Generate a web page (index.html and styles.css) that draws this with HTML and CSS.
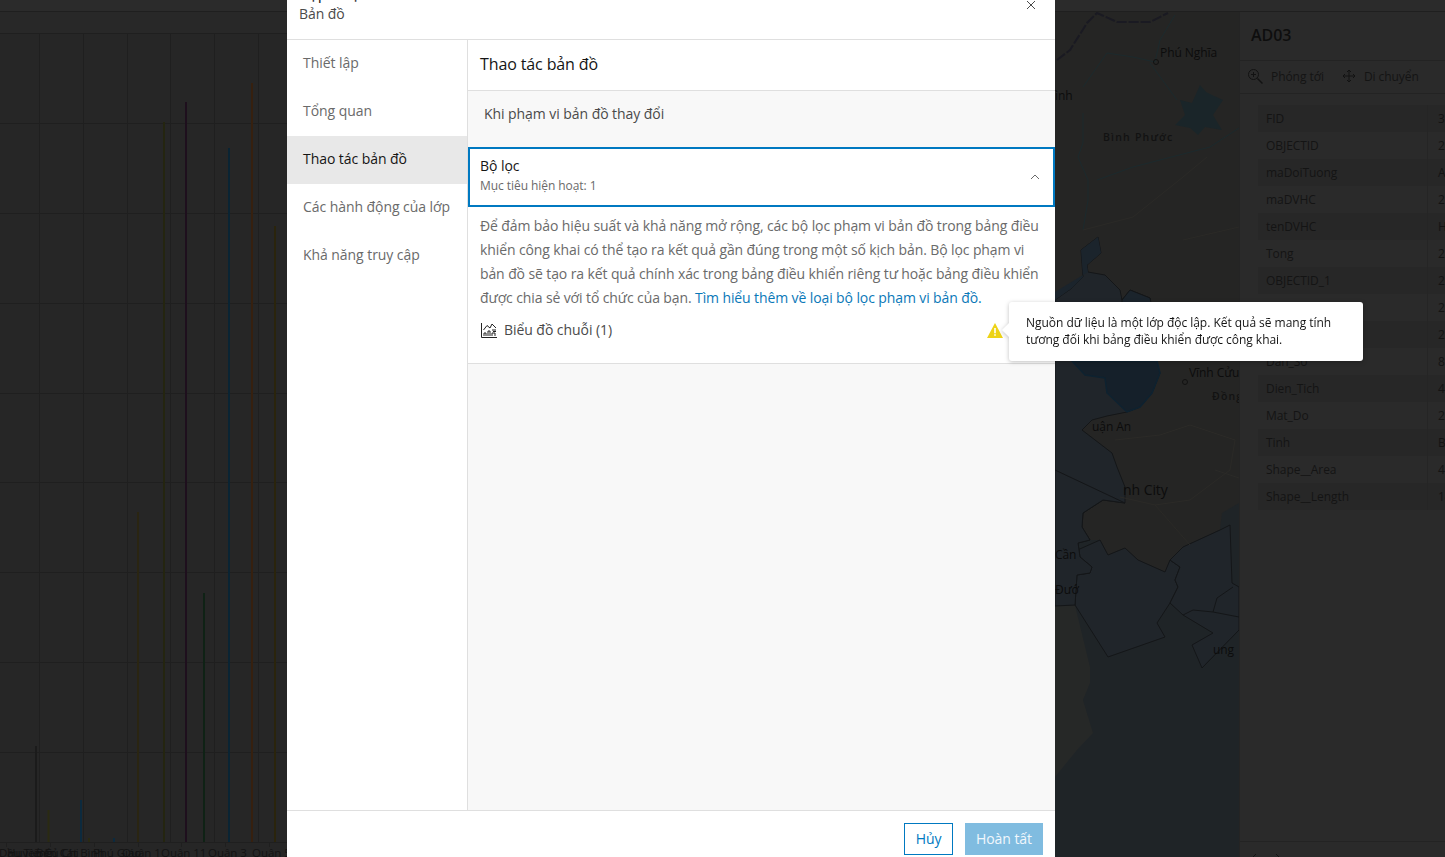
FILE: index.html
```html
<!DOCTYPE html>
<html lang="vi">
<head>
<meta charset="utf-8">
<title>Thao tác bản đồ</title>
<link rel="stylesheet" href="styles.css">
</head>
<body>
<div class="app">
  <div class="topbar"></div>
  <div class="workspace">
    <section class="chart">
      <svg class="chart-svg" width="287" height="845" viewBox="0 12 287 845">
        <rect x="0" y="12" width="287" height="22" fill="#282828"/>
        <g stroke="#1f1f1f" fill="none">
          <path d="M0 33.5H287M0 123.5H287M0 213.5H287M0 303.5H287M0 393.5H287M0 482.5H287M0 572.5H287M0 662.5H287M0 752.5H287M0 842.5H287"/>
          <path d="M39.5 34V842M83.5 34V842M127.5 34V842M170.5 34V842M214.5 34V842M258.5 34V842"/>
          <path d="M6.5 842V847M50.5 842V847M94.5 842V847M138.5 842V847M181.5 842V847M225.5 842V847M269.5 842V847"/>
        </g>
        <g fill="none" stroke-width="2">
          <path d="M36 746V842" stroke="#1b1b1b"/>
          <path d="M48.5 810V842" stroke="#2a2a12"/>
          <path d="M81 800V842" stroke="#0c2a3e"/>
          <path d="M89 838V842" stroke="#2a2a12"/>
          <path d="M114 838V842" stroke="#0c2a3e"/>
          <path d="M138 512V842" stroke="#2a2512"/>
          <path d="M164 122V842" stroke="#242510"/>
          <path d="M186 102V842" stroke="#1e0f1d"/>
          <path d="M204 593V842" stroke="#0f2215"/>
          <path d="M229 148V842" stroke="#0a2433"/>
          <path d="M252 83V842" stroke="#36200f"/>
          <path d="M275 226V842" stroke="#2a240c"/>
        </g>
      </svg>
      <div class="axis-labels">
        <span class="ax ax-a">Dầu Tiếng</span><span class="ax ax-h">Huyện Củ Chi</span><span class="ax ax-b">Bến Cát Bình</span><span class="ax ax-c">Phú Giáo</span><span class="ax ax-d">Quận 1</span><span class="ax ax-e">Quận 11</span><span class="ax ax-f">Quận 3</span><span class="ax ax-g">Quận 5</span>
      </div>
    </section>
    <section class="map">
      <svg class="map-svg" width="184" height="845" viewBox="1055 12 184 845">
        <rect x="1055" y="12" width="184" height="845" fill="#1f2427"/>
        <path fill="#252524" d="M1055 12H1239V503L1222 513L1220 530L1183 547L1170 560L1165 572L1138 560L1125 548L1108 555L1100 540L1090 540L1055 500Z"/>
        <path fill="#262827" d="M1055 606L1075 605L1090 667L1090 683L1083 700L1093 733L1077 750L1055 777Z"/>
        <path fill="#20252a" stroke="#141618" d="M1055 300L1072 288L1083 277L1081 250L1098 237L1101 253L1087 265L1088 272L1105 275L1120 290L1122 300L1130 290L1150 298L1155 362L1160 373L1152 393L1140 407L1127 412L1107 416L1092 420L1082 430L1112 453L1117 467L1125 487L1125 503L1103 500L1083 513L1082 527L1090 540L1078 543L1080 557L1092 567L1090 573L1077 575L1075 605L1108 657L1165 637L1157 623L1170 603L1178 587L1175 580L1180 567L1170 560L1165 572L1138 560L1125 548L1108 555L1100 540L1055 560Z"/>
        <path fill="#20252a" stroke="#141618" d="M1055 470L1125 503L1103 500L1083 513L1082 527L1090 540L1078 543L1080 557L1092 567L1090 573L1077 575L1075 605L1055 606Z"/>
        <path fill="#20252a" stroke="#141618" d="M1170 560L1183 547L1220 530L1230 525L1232 583L1239 587V630L1202 668L1192 645L1213 633L1183 615L1170 603L1178 587L1175 580L1180 567Z"/>
        <path fill="none" stroke="#141618" d="M1233 587L1217 598L1213 612L1193 610L1183 615M1213 612L1239 617"/>
        <path fill="#15202a" stroke="#0e2230" stroke-width="1.5" d="M1072 361L1085 375L1105 378L1107 393L1127 412L1140 407L1152 393L1160 373L1157 361Z"/>
        <path fill="#1b242c" d="M1055 300L1072 288L1083 277L1081 250L1098 237L1101 253L1087 265L1088 272L1055 292Z"/>
        <path fill="#1b242c" stroke="#141618" d="M1122 300L1130 290L1150 298L1155 320H1122Z"/>
        <path fill="none" stroke="#1c2a2d" d="M1083 113L1083 143L1078 157L1088 180L1088 200L1083 230M1083 87L1107 53L1133 57L1155 62M1150 63L1177 100M1097 180L1133 167L1210 147L1239 128M1175 15L1160 40L1155 62"/>
        <path fill="none" stroke="#2b2a27" d="M1083 230L1133 217L1183 177L1207 157M1239 227L1183 240M1115 440L1160 435L1190 425L1235 440L1230 470L1190 500L1155 505L1120 497M1155 505L1190 545M1215 470L1239 478"/>
        <path fill="none" stroke="#1a1a22" stroke-width="2" stroke-dasharray="10 2" d="M1057 60L1070 50L1087 23L1097 13L1117 22L1150 22L1168 13"/>
        <path fill="#1a2529" d="M1180 100L1192 103L1200 85L1206 92L1214 96L1223 100L1213 115L1222 130L1205 127L1198 135L1190 128L1175 125L1185 115Z"/>
        <circle cx="1156" cy="62" r="2.5" fill="none" stroke="#111"/>
        <circle cx="1185" cy="382" r="2.5" fill="none" stroke="#111"/>
      </svg>
      <span class="place pn">Phú Nghĩa</span>
      <span class="place inh">ình</span>
      <span class="place spaced bp">Bình Phước</span>
      <span class="place vc">Vĩnh Cửu</span>
      <span class="place spaced dn">Đồng</span>
      <span class="place ta">uận An</span>
      <span class="place hcm">nh City</span>
      <span class="place cg">Cần</span>
      <span class="place dg">Đướ</span>
      <span class="place vt">ung</span>
    </section>
    <aside class="panel">
      <h2 class="panel-title">AD03</h2>
      <div class="panel-tools">
        <span class="tool">
          <svg width="16" height="16" viewBox="0 0 16 16" fill="none" stroke="#121212"><circle cx="6.5" cy="6.5" r="5"/><path d="M6.5 4v5M4 6.5h5"/><path d="M10.5 10.5l5 5" stroke-width="1.5"/></svg>
          Phóng tới
        </span>
        <span class="tool">
          <svg width="14" height="14" viewBox="0 0 14 14" fill="none" stroke="#121212"><path d="M7 1v12M1 7h12M5 3l2-2 2 2M5 11l2 2 2-2M3 5L1 7l2 2M11 5l2 2-2 2"/></svg>
          Di chuyển
        </span>
      </div>
      <dl class="fields">
        <div class="field"><dt>FID</dt><dd>32</dd></div>
        <div class="field"><dt>OBJECTID</dt><dd>20</dd></div>
        <div class="field"><dt>maDoiTuong</dt><dd>A</dd></div>
        <div class="field"><dt>maDVHC</dt><dd>25</dd></div>
        <div class="field"><dt>tenDVHC</dt><dd>H</dd></div>
        <div class="field"><dt>Tong</dt><dd>22</dd></div>
        <div class="field"><dt>OBJECTID_1</dt><dd>20</dd></div>
        <div class="field"><dt>Nam</dt><dd>20</dd></div>
        <div class="field"><dt>Ma_DVHC</dt><dd>25</dd></div>
        <div class="field"><dt>Dan_So</dt><dd>89</dd></div>
        <div class="field"><dt>Dien_Tich</dt><dd>40</dd></div>
        <div class="field"><dt>Mat_Do</dt><dd>22</dd></div>
        <div class="field"><dt>Tinh</dt><dd>B</dd></div>
        <div class="field"><dt>Shape__Area</dt><dd>4</dd></div>
        <div class="field"><dt>Shape__Length</dt><dd>14</dd></div>
      </dl>
      <div class="panel-foot">
        <svg width="48" height="16" viewBox="0 0 48 16" fill="none" stroke="#141414"><path d="M16 12l-4 4M36 12l4 4"/></svg>
      </div>
    </aside>
  </div>
</div>

<div class="modal">
  <header class="modal-head">
    <div class="modal-title">Cập nhật</div>
    <div class="modal-sub">Bản đồ</div>
    <svg class="close" width="10" height="10" viewBox="0 0 10 10" fill="none" stroke="#4a4a4a"><path d="M1 1l8 8M9 1l-8 8"/></svg>
  </header>
  <div class="modal-body">
    <nav class="side">
      <a class="side-item">Thiết lập</a>
      <a class="side-item">Tổng quan</a>
      <a class="side-item active">Thao tác bản đồ</a>
      <a class="side-item">Các hành động của lớp</a>
      <a class="side-item">Khả năng truy cập</a>
    </nav>
    <main class="content">
      <h3 class="content-title">Thao tác bản đồ</h3>
      <div class="content-scroll">
        <div class="trigger">Khi phạm vi bản đồ thay đổi</div>
        <div class="acc">
          <div class="acc-head">
            <div>
              <div class="acc-title">Bộ lọc</div>
              <div class="acc-sub">Mục tiêu hiện hoạt: 1</div>
            </div>
            <svg class="chev" width="10" height="6" viewBox="0 0 10 6" fill="none" stroke="#6a6a6a"><path d="M1 5l4-4 4 4"/></svg>
          </div>
          <div class="acc-body">
            <p class="note">Để đảm bảo hiệu suất và khả năng mở rộng, các bộ lọc phạm vi bản đồ trong bảng điều khiển công khai có thể tạo ra kết quả gần đúng trong một số kịch bản. Bộ lọc phạm vi bản đồ sẽ tạo ra kết quả chính xác trong bảng điều khiển riêng tư hoặc bảng điều khiển được chia sẻ với tổ chức của bạn. <a class="link">Tìm hiểu thêm về loại bộ lọc phạm vi bản đồ.</a></p>
            <div class="target">
              <svg class="target-icon" width="16" height="16" viewBox="0 0 16 16" fill="none" stroke="#222"><path d="M.5 1v14.5H16"/><path d="M3 14v-3h2v3M7 14V9h2v5M11 14v-3h3v3"/><path d="M2.5 8L6 3.5 9 6l2-4 4 4M11 8h4M12 9.5h3"/></svg>
              <span>Biểu đồ chuỗi (1)</span>
              <svg class="warn" width="16" height="15" viewBox="0 0 16 15"><path fill="#edd317" d="M8 0l8 15H0z"/><path fill="#fff" d="M7.2 5h1.6v5.2H7.2zM7.2 11.2h1.6v1.6H7.2z"/></svg>
            </div>
          </div>
        </div>
      </div>
    </main>
  </div>
  <footer class="modal-foot">
    <button class="btn btn-outline">Hủy</button>
    <button class="btn btn-solid">Hoàn tất</button>
  </footer>
</div>

<div class="tooltip">Nguồn dữ liệu là một lớp độc lập. Kết quả sẽ mang tính tương đối khi bảng điều khiển được công khai.</div>
</body>
</html>
```

FILE: styles.css
```css
* { box-sizing: border-box; }
html, body { margin: 0; height: 100%; overflow: hidden; }
body { font-family: "Open Sans", "Noto Sans", sans-serif; background: #262626; color: #4a4a4a; letter-spacing: -0.06px; }

.app { display: flex; flex-direction: column; height: 857px; }
.topbar { height: 12px; flex: none; background: #2b2b2b; border-bottom: 1px solid #1f1f1f; }
.workspace { flex: 1; display: flex; min-height: 0; }

.chart { position: relative; width: 1055px; flex: none; overflow: hidden; background: #262626; }
.chart-svg { display: block; }
.axis-labels { position: absolute; left: 0; right: 0; top: 0; }
.ax { position: absolute; top: 833px; font-size: 11.5px; line-height: 16px; color: #131313; white-space: nowrap; }
.ax-a { left: -1px; }
.ax-h { left: 7px; }
.ax-b { left: 36px; }
.ax-c { left: 93px; }
.ax-d { left: 122px; }
.ax-e { left: 161px; }
.ax-f { left: 208px; }
.ax-g { left: 252px; }

.map { position: relative; width: 184px; flex: none; background: #1f2427; overflow: hidden; }
.map-svg { position: absolute; left: 0; top: 0; }
.place { position: absolute; font-size: 12px; line-height: 16px; color: #0c0c0c; white-space: nowrap; }
.spaced { font-size: 10.5px; letter-spacing: 1.2px; color: #121212; font-weight: 600; }
.pn { left: 105px; top: 33px; }
.inh { left: 0; top: 76px; }
.bp { left: 48px; top: 117px; }
.vc { left: 134px; top: 353px; }
.dn { left: 157px; top: 376px; }
.ta { left: 37px; top: 407px; }
.hcm { left: 68px; top: 470px; font-size: 14px; }
.cg { left: 0; top: 535px; }
.dg { left: 0; top: 570px; }
.vt { left: 158px; top: 630px; }

.panel { flex: 1; display: flex; flex-direction: column; background: #2a2a2a; overflow: hidden; border-left: 1px solid #242424; min-width: 0; }
.panel-title { margin: 0; flex: none; height: 49px; padding: 12px 11px 0; font-size: 16px; font-weight: 600; color: #0e0e0e; border-bottom: 1px solid #232323; line-height: 22px; }
.panel-tools { display: flex; align-items: center; gap: 18px; flex: none; height: 33px; padding: 0 0 2px 7px; border-bottom: 1px solid #232323; font-size: 12px; color: #141414; white-space: nowrap; }
.tool { display: inline-flex; align-items: center; gap: 8px; }
.fields { margin: 11px 0 0 18px; display: flex; flex-direction: column; }
.field { display: flex; height: 27px; align-items: center; }
.field:nth-child(odd) { background: #272727; }
.field dt { flex: none; width: 169px; padding-left: 8px; font-size: 12px; color: #141414; }
.field dd { margin: 0; padding-left: 10px; flex: none; width: 40px; font-size: 12px; color: #141414; border-left: 1px solid #252525; line-height: 27px; }
.panel-foot { margin-top: auto; flex: none; height: 16px; border-top: 1px solid #232323; line-height: 0; }

.modal { position: absolute; left: 287px; top: 0; width: 768px; height: 857px; background: #fff; display: flex; flex-direction: column; }
.modal-head { position: relative; height: 40px; flex: none; border-bottom: 1px solid #dfdfdf; }
.modal-title { position: absolute; left: 12px; top: -18px; font-size: 16px; line-height: 22px; color: #151515; }
.modal-sub { position: absolute; left: 12px; top: 4px; font-size: 14px; line-height: 20px; color: #4a4a4a; }
.close { position: absolute; right: 19px; top: 0; }
.modal-body { flex: 1; display: flex; min-height: 0; }
.side { width: 181px; flex: none; border-right: 1px solid #dfdfdf; }
.side-item { display: flex; align-items: center; height: 48px; padding: 0 0 3px 16px; font-size: 14px; color: #6a6a6a; }
.side-item.active { background: #e8e8e8; color: #151515; }
.content { flex: 1; display: flex; flex-direction: column; min-width: 0; }
.content-title { margin: 0; flex: none; height: 51px; padding-left: 12px; font-size: 16px; font-weight: 400; line-height: 49px; letter-spacing: -0.12px; color: #151515; border-bottom: 1px solid #dfdfdf; }
.content-scroll { flex: 1; background: #f8f8f8; }
.trigger { height: 56px; padding: 12px 16px 0; font-size: 14px; line-height: 22px; color: #4a4a4a; }
.acc { background: #fff; border-bottom: 1px solid #dfdfdf; }
.acc-head { display: flex; justify-content: space-between; align-items: center; height: 60px; padding: 0 13px 0 10px; border: 2px solid #0079c1; }
.acc-title { font-size: 14px; line-height: 20px; color: #151515; margin-top: -4px; }
.acc-sub { font-size: 12px; line-height: 18px; color: #6a6a6a; margin-top: 1px; }
.acc-body { padding: 7px 12px 0; height: 156px; }
.note { margin: 0; font-size: 14px; line-height: 24px; letter-spacing: -0.11px; color: #6a6a6a; }
.link { color: #0a78b8; }
.target { display: flex; align-items: center; gap: 8px; margin-top: 10px; font-size: 14px; line-height: 20px; color: #4a4a4a; }
.target-icon { margin-left: 1px; margin-right: -1px; }
.warn { margin-left: auto; margin-right: 40px; }
.modal-foot { flex: none; height: 47px; border-top: 1px solid #dfdfdf; display: flex; justify-content: flex-end; align-items: flex-start; gap: 12px; padding: 12px 12px 0 0; }
.btn { height: 32px; padding: 0 0 2px; font-family: inherit; font-size: 14px; border-radius: 0; letter-spacing: -0.06px; }
.btn-outline { width: 49px; background: #fff; border: 1px solid #0079c1; color: #0079c1; }
.btn-solid { width: 78px; background: #80bce0; border: 1px solid #80bce0; color: #f0f7fc; }

.tooltip { position: absolute; left: 1009px; top: 302px; width: 354px; height: 59px; padding: 12px 17px; background: #fff; border-radius: 3px; filter: drop-shadow(0 1px 2px rgba(0,0,0,.25)); font-size: 12px; line-height: 17px; letter-spacing: -0.03px; color: #151515; }
.tooltip::before { content: ""; position: absolute; left: -5px; top: 23px; width: 10px; height: 10px; background: #fff; transform: rotate(45deg); }
```
